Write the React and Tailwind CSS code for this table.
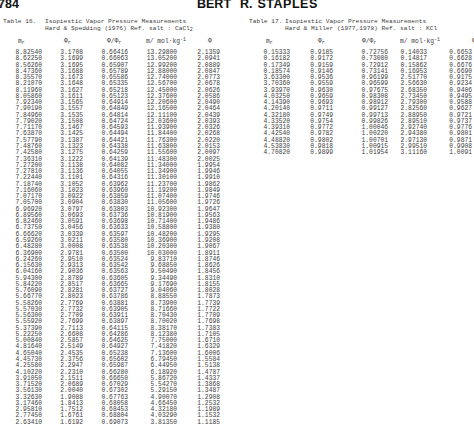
import React from 'react';

const LEFT_ROWS = [
  ['8.82540', '3.1708', '0.66416', '13.29800', '2.1359'],
  ['8.62250', '3.1699', '0.66063', '13.05200', '2.0941'],
  ['8.56260', '3.1695', '0.65907', '12.99200', '2.0889'],
  ['8.47360', '3.1688', '0.65789', '12.88000', '2.0847'],
  ['8.35570', '3.1673', '0.65586', '12.74000', '2.0773'],
  ['8.21070', '3.1648', '0.65335', '12.56700', '2.0678'],
  ['8.11960', '3.1627', '0.65218', '12.45000', '2.0626'],
  ['8.05860', '3.1611', '0.65123', '12.37600', '2.0586'],
  ['7.92340', '3.1565', '0.64914', '12.20600', '2.0490'],
  ['7.90190', '3.1557', '0.64849', '12.16500', '2.0464'],
  ['7.84960', '3.1535', '0.64814', '12.11100', '2.0439'],
  ['7.79020', '3.1508', '0.64724', '12.03600', '2.0393'],
  ['7.71170', '3.1467', '0.64593', '11.93900', '2.0326'],
  ['7.63870', '3.1425', '0.64494', '11.84400', '2.0268'],
  ['7.57790', '3.1387', '0.64421', '11.76300', '2.0220'],
  ['7.48760', '3.1323', '0.64338', '11.63800', '2.0153'],
  ['7.42580', '3.1275', '0.64259', '11.55600', '2.0097'],
  ['7.36310', '3.1222', '0.64139', '11.48300', '2.0025'],
  ['7.27200', '3.1138', '0.64082', '11.34000', '1.9954'],
  ['7.27810', '3.1136', '0.64055', '11.34900', '1.9946'],
  ['7.22440', '3.1101', '0.64316', '11.30100', '1.9910'],
  ['7.18740', '3.1052', '0.63962', '11.23700', '1.9862'],
  ['7.16060', '3.1023', '0.63960', '11.19200', '1.9849'],
  ['7.07170', '3.0922', '0.63859', '11.07400', '1.9746'],
  ['7.05700', '3.0904', '0.63830', '11.05600', '1.9726'],
  ['6.96920', '3.0797', '0.63803', '10.92300', '1.9647'],
  ['6.89560', '3.0693', '0.63736', '10.81900', '1.9563'],
  ['6.82460', '3.0591', '0.63698', '10.71400', '1.9486'],
  ['6.73750', '3.0456', '0.63633', '10.58800', '1.9380'],
  ['6.66620', '3.0339', '0.63597', '10.48200', '1.9295'],
  ['6.59260', '3.0211', '0.63580', '10.36900', '1.9208'],
  ['6.48280', '3.0008', '0.63538', '10.20300', '1.9067'],
  ['6.36900', '2.9781', '0.63500', '10.03000', '1.8911'],
  ['6.24260', '2.9510', '0.63524', '9.83710', '1.8746'],
  ['6.15630', '2.9313', '0.63542', '9.68850', '1.8626'],
  ['6.04160', '2.9036', '0.63563', '9.50490', '1.8456'],
  ['5.94300', '2.8789', '0.63605', '9.34490', '1.8310'],
  ['5.84220', '2.8517', '0.63665', '9.17690', '1.8155'],
  ['5.76090', '2.8281', '0.63727', '9.04060', '1.8028'],
  ['5.66770', '2.8023', '0.63786', '8.88550', '1.7873'],
  ['5.58260', '2.7769', '0.63881', '8.73900', '1.7739'],
  ['5.57030', '2.7732', '0.63905', '8.71660', '1.7722'],
  ['5.56300', '2.7709', '0.63911', '8.70430', '1.7709'],
  ['5.55920', '2.7699', '0.63897', '8.70020', '1.7698'],
  ['5.37390', '2.7113', '0.64115', '8.38170', '1.7383'],
  ['5.22250', '2.6608', '0.64286', '8.12380', '1.7105'],
  ['5.00840', '2.5857', '0.64625', '7.75000', '1.6710'],
  ['4.81640', '2.5149', '0.64927', '7.41820', '1.6329'],
  ['4.65040', '2.4535', '0.65238', '7.13600', '1.6006'],
  ['4.45730', '2.3756', '0.65602', '6.79450', '1.5584'],
  ['4.25580', '2.2947', '0.65987', '6.44950', '1.5138'],
  ['4.10220', '2.2310', '0.66280', '6.18920', '1.4787'],
  ['3.91050', '2.1511', '0.66650', '5.86720', '1.4337'],
  ['3.71520', '2.0689', '0.67029', '5.54270', '1.3868'],
  ['3.56130', '2.0040', '0.67302', '5.29150', '1.3487'],
  ['3.32630', '1.9088', '0.67763', '4.90070', '1.2908'],
  ['3.17460', '1.8413', '0.68058', '4.66450', '1.2532'],
  ['2.95810', '1.7512', '0.68453', '4.32180', '1.1989'],
  ['2.77450', '1.6761', '0.68804', '4.03290', '1.1532'],
  ['2.63410', '1.6192', '0.69073', '3.81350', '1.1185'],
];

const RIGHT_ROWS = [
  ['0.15333', '0.9185', '0.72756', '0.14033', '0.6653'],
  ['0.16182', '0.9172', '0.73080', '0.14817', '0.6628'],
  ['0.17349', '0.9159', '0.72912', '0.15862', '0.6676'],
  ['0.18574', '0.9146', '0.73141', '0.16953', '0.6690'],
  ['3.63300', '0.9536', '0.96199', '2.51770', '0.9175'],
  ['3.70360', '0.9559', '0.96599', '2.56630', '0.9234'],
  ['3.93970', '0.9630', '0.97675', '2.68350', '0.9406'],
  ['4.03250', '0.9659', '0.98308', '2.73450', '0.9495'],
  ['4.14390', '0.9693', '0.98912', '2.79300', '0.9588'],
  ['4.20140', '0.9711', '0.99127', '2.82560', '0.9627'],
  ['4.32180', '0.9749', '0.99713', '2.88950', '0.9721'],
  ['4.33520', '0.9754', '0.99826', '2.89510', '0.9737'],
  ['4.39310', '0.9772', '1.00046', '2.92740', '0.9776'],
  ['4.42540', '0.9782', '1.00220', '2.94380', '0.9801'],
  ['4.48820', '0.9802', '1.00701', '2.97130', '0.9871'],
  ['4.53830', '0.9818', '1.00915', '2.99510', '0.9908'],
  ['4.70820', '0.9899', '1.01954', '3.11160', '1.0091'],
];

const mono = { fontFamily: '"Liberation Mono", "DejaVu Sans Mono", monospace' };

const Sub = ({ children }) => <sub className="text-[5px] relative top-[1px] align-baseline">{children}</sub>;

const Headers = ({ pads, grid }) => (
  <div className={`grid ${grid} h-[10px] mt-[5px] items-center whitespace-nowrap`}>
    <div className={pads[0]}>m<Sub>r</Sub></div>
    <div className={pads[1]}>Φ<Sub>r</Sub></div>
    <div className={pads[2]}>Φ/Φ<Sub>r</Sub></div>
    <div className={pads[3]}>m/ mol·kg<sup className="text-[5px] relative -top-[2px] align-baseline">-1</sup></div>
    <div className={pads[4]}>Φ</div>
  </div>
);

const DataTable = ({ label, labelPad, line1, line2, pads, grid, rows, width }) => (
  <section className={`${width} shrink-0`}>
    <div className="flex leading-[7px] text-[6.2px] whitespace-nowrap">
      <div className={`w-[45px] ${labelPad} shrink-0`}>{label}</div>
      <div>
        <div>{line1}</div>
        <div>{line2}</div>
      </div>
    </div>
    <Headers pads={pads} grid={grid} />
    <div className="mt-[3px]">
      {rows.map((r, i) => (
        <div key={i} className={`grid ${grid} leading-[6.27px] h-[6.27px] whitespace-nowrap`}>
          <div className="text-right">{r[0]}</div>
          <div className="text-right">{r[1]}</div>
          <div className="text-right">{r[2]}</div>
          <div className="text-right">{r[3]}</div>
          <div className="text-right">{r[4]}</div>
        </div>
      ))}
    </div>
  </section>
);

export default function App() {
  return (
    <div className="w-[474px] h-[426px] overflow-hidden bg-white text-[#3d3d3d]">
      <header
        className="flex items-start h-[20px] -mt-[2px] -ml-[2px] text-[12.5px] font-bold text-[#111] leading-[13px]"
        style={{ fontFamily: '"Liberation Sans", Arial, sans-serif' }}
      >
        <span className="w-[199px]">784</span>
        <span className="flex">
          <span className="mr-[9px]">BERT</span>
          <span className="mr-[5px]">R.</span>
          <span className="tracking-[0.5px]">STAPLES</span>
        </span>
      </header>
      <main className="flex text-[6.3px]" style={mono}>
        <DataTable
          width="w-[240px]"
          label="Table 16."
          labelPad="pl-[3px]"
          line1="Isopiestic Vapor Pressure Measurements"
          line2={<>Hard &amp; Spedding (1976)  Ref. salt : CaCl<Sub>2</Sub></>}
          grid="grid-cols-[42px_41px_45px_49px_43px]"
          pads={['pl-[18px]', 'pl-[22px]', 'pl-[24px]', 'pl-[18px]', 'pl-[31px]']}
          rows={LEFT_ROWS}
        />
        <DataTable
          width="w-[234px]"
          label="Table 17."
          labelPad="pl-[9px]"
          line1="Isopiestic Vapor Pressure Measurements"
          line2="Hard & Miller (1977,1978)  Ref. salt : KCl"
          grid="grid-cols-[50px_43px_55px_39px_45px]"
          pads={['pl-[26px]', 'pl-[28px]', 'pl-[29px]', 'pl-[12px]', 'pl-[45px]']}
          rows={RIGHT_ROWS}
        />
      </main>
    </div>
  );
}
